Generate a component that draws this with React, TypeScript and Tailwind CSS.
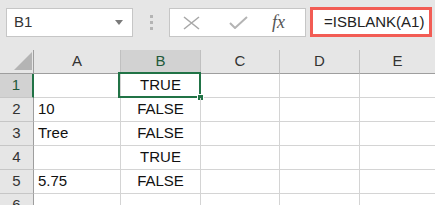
const cols = ["A", "B", "C", "D", "E"];

const rows: { n: number; a: string; b: string }[] = [
  { n: 1, a: "", b: "TRUE" },
  { n: 2, a: "10", b: "FALSE" },
  { n: 3, a: "Tree", b: "FALSE" },
  { n: 4, a: "", b: "TRUE" },
  { n: 5, a: "5.75", b: "FALSE" },
  { n: 6, a: "", b: "" },
];

const Toolbar = () => (
  <div className="flex h-[50px] items-start bg-[#e6e6e6]">
    <div className="ml-[6px] mt-[8px] flex h-[29px] w-[127px] items-center justify-between border border-[#c6c6c6] bg-white pl-[7px] pr-[9px] text-[15px] text-[#333]">
      <span>B1</span>
      <svg width="8" height="5" viewBox="0 0 8 5">
        <path d="M0 0h8L4 5z" fill="#7a7a7a" />
      </svg>
    </div>
    <div className="ml-[17px] mt-[15px] flex flex-col gap-[3px]">
      <span className="h-[3px] w-[3px] bg-[#b4b4b4]" />
      <span className="h-[3px] w-[3px] bg-[#b4b4b4]" />
      <span className="h-[3px] w-[3px] bg-[#b4b4b4]" />
    </div>
    <div className="ml-[16px] mt-[8px] flex h-[29px] w-[137px] items-center border border-[#c6c6c6] bg-white">
      <svg className="ml-[12px]" width="19" height="14" viewBox="0 0 19 14">
        <path d="M2 1l15 12M17 1L2 13" stroke="#a8a8a8" strokeWidth="1.6" fill="none" />
      </svg>
      <svg className="ml-[28px]" width="19" height="13" viewBox="0 0 19 13">
        <path d="M1 7l5 5L18 1" stroke="#b4b4b4" strokeWidth="2" fill="none" />
      </svg>
      <span className="ml-[24px] font-['Liberation_Serif',serif] text-[18px] italic text-[#555]">
        fx
      </span>
    </div>
    <div className="ml-[4px] mt-[7px] flex h-[30px] w-[122px] items-center border-[3px] border-[#f25c54] bg-white pl-[11px] text-[15px] text-[#222]">
      =ISBLANK(A1)
    </div>
  </div>
);

export default function App() {
  return (
    <div className="h-[205px] w-[435px] overflow-hidden bg-white font-['Liberation_Sans',Arial,sans-serif]">
      <Toolbar />
      <div className="grid grid-cols-[34px_87px_80px_79px_80px_76px] grid-rows-[24px_24px_24px_24px_24px_24px_24px]">
        <div className="relative border-b border-r border-b-[#9e9e9e] border-r-[#9e9e9e] bg-[#e6e6e6]">
          <svg className="absolute left-[14px] top-[2px]" width="19" height="18" viewBox="0 0 19 18">
            <path d="M18 0v18H0z" fill="#b4b4b4" />
          </svg>
        </div>
        {cols.map((c) => (
          <div
            key={c}
            className={`flex items-center justify-center border-b border-r border-b-[#9e9e9e] border-r-[#c0c0c0] text-[15px] ${
              c === "B" ? "bg-[#d2d2d2] text-[#1f5a3a]" : "bg-[#e6e6e6] text-[#333]"
            }`}
          >
            {c}
          </div>
        ))}
        {rows.map((r) => (
          <Row key={r.n} row={r} />
        ))}
      </div>
    </div>
  );
}

const Row = ({ row }: { row: { n: number; a: string; b: string } }) => {
  const selected = row.n === 1;
  return (
    <>
      <div
        className={`flex items-center justify-center border-b border-r border-b-[#c6c6c6] text-[15px] ${
          selected
            ? "border-r-2 border-r-[#217346] bg-[#d2d2d2] text-[#1f5a3a]"
            : "border-r-[#9e9e9e] bg-[#e6e6e6] text-[#333]"
        }`}
      >
        {row.n}
      </div>
      <div className="flex items-center border-b border-r border-[#d4d4d4] pl-[4px] text-[15px] text-[#111]">
        {row.a}
      </div>
      <div className="relative flex items-center justify-center border-b border-r border-[#d4d4d4] text-[15px] text-[#111]">
        {row.b}
        {selected && (
          <>
            <div className="absolute -left-[3px] -top-[2px] h-[26px] w-[83px] border-2 border-[#217346]" />
            <div className="absolute -bottom-[4px] -right-[4px] h-[7px] w-[7px] border border-white bg-[#217346]" />
          </>
        )}
      </div>
      <div className="border-b border-r border-[#d4d4d4]" />
      <div className="border-b border-r border-[#d4d4d4]" />
      <div className="border-b border-r border-[#d4d4d4]" />
    </>
  );
};
